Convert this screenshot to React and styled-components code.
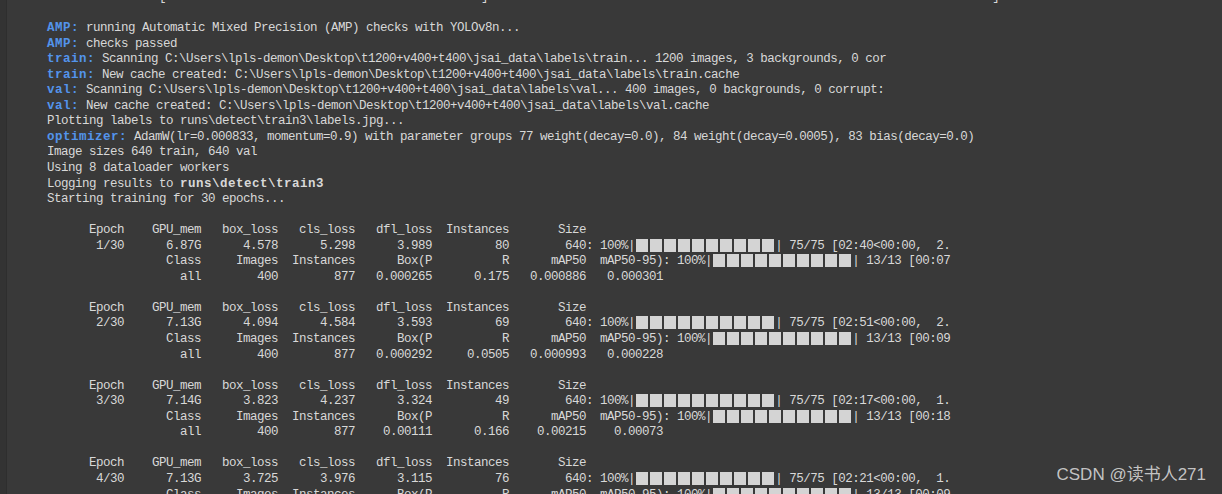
import React from "react"
import styled, { createGlobalStyle } from "styled-components"

const GlobalStyle = createGlobalStyle`
  html, body {
    margin: 0;
    background: #393939;
    overflow: hidden;
  }
`

const Screen = styled.div`
  position: relative;
  display: flex;
  width: 1222px;
  height: 494px;
  overflow: hidden;
  background: #393939;
`

const Gutter = styled.div`
  flex: none;
  width: 6px;
  background: #333333;
  border-right: 1px solid #2e2e2e;
`

const Console = styled.div`
  flex: 1;
  margin-top: -10px;
  padding-left: 40px;
  font-family: "Liberation Mono", monospace;
  font-size: 12.5px;
  letter-spacing: -0.5px;
  line-height: 15.55px;
  color: #d8d8d8;
`

const Line = styled.div`
  height: 15.55px;
  white-space: pre;
`

const Label = styled.b`
  font-weight: bold;
  letter-spacing: 0.5px;
  color: ${(p) => (p.$blue ? "#5394ec" : "inherit")};
`

const Cell = styled.span`
  display: inline-block;
  width: 12px;
  height: 13px;
  margin: 0 1px;
  vertical-align: -3px;
  background: #d4d4d4;
`

const Watermark = styled.div`
  position: absolute;
  right: 16px;
  bottom: 9px;
  font-family: "Liberation Sans", "Noto Sans CJK SC", sans-serif;
  font-size: 17px;
  color: rgba(214, 214, 214, 0.9);
`

const col = (v, w = 11) => String(v).padStart(w)

const Bar = ({ n = 10 }) => (
  <>
    {Array.from({ length: n }).map((_, i) => (
      <Cell key={i} />
    ))}
  </>
)

const epochs = [
  {
    epoch: "1/30", mem: "6.87G", box: "4.578", cls: "5.298", dfl: "3.989", inst: "80",
    train: "75/75 [02:40<00:00,  2.", val: "13/13 [00:07",
    res: ["0.000265", "0.175", "0.000886", "0.000301"],
  },
  {
    epoch: "2/30", mem: "7.13G", box: "4.094", cls: "4.584", dfl: "3.593", inst: "69",
    train: "75/75 [02:51<00:00,  2.", val: "13/13 [00:09",
    res: ["0.000292", "0.0505", "0.000993", "0.000228"],
  },
  {
    epoch: "3/30", mem: "7.14G", box: "3.823", cls: "4.237", dfl: "3.324", inst: "49",
    train: "75/75 [02:17<00:00,  1.", val: "13/13 [00:18",
    res: ["0.00111", "0.166", "0.00215", "0.00073"],
  },
  {
    epoch: "4/30", mem: "7.13G", box: "3.725", cls: "3.976", dfl: "3.115", inst: "76",
    train: "75/75 [02:21<00:00,  1.", val: "13/13 [00:09",
    res: ["0.00148", "0.171", "0.00263", "0.00091"],
  },
]

const header = ["Epoch", "GPU_mem", "box_loss", "cls_loss", "dfl_loss", "Instances", "Size"]
  .map((s) => col(s))
  .join("")

const valHeader =
  col("Class", 22) +
  ["Images", "Instances", "Box(P", "R", "mAP50", "mAP50-95)"].map((s) => col(s)).join("")

const EpochBlock = ({ e }) => (
  <>
    <Line>{header}</Line>
    <Line>
      {[e.epoch, e.mem, e.box, e.cls, e.dfl, e.inst, "640"].map((s) => col(s)).join("")}
      {": 100%|"}
      <Bar />
      {"| " + e.train}
    </Line>
    <Line>
      {valHeader}
      {": 100%|"}
      <Bar />
      {"| " + e.val}
    </Line>
    <Line>{col("all", 22) + col(400) + col(877) + e.res.map((s) => col(s)).join("")}</Line>
    <Line> </Line>
  </>
)

const path = "C:\\Users\\lpls-demon\\Desktop\\t1200+v400+t400\\jsai_data\\labels\\"

const App = () => (
  <Screen>
    <GlobalStyle />
    <Gutter />
    <Console>
      <Line>{"                [                                             ]                                                                        ]"}</Line>
      <Line> </Line>
      <Line>
        <Label $blue>AMP:</Label> running Automatic Mixed Precision (AMP) checks with YOLOv8n...
      </Line>
      <Line>
        <Label $blue>AMP:</Label> checks passed
      </Line>
      <Line>
        <Label $blue>train:</Label>
        {" Scanning " + path + "train... 1200 images, 3 backgrounds, 0 cor"}
      </Line>
      <Line>
        <Label $blue>train:</Label>
        {" New cache created: " + path + "train.cache"}
      </Line>
      <Line>
        <Label $blue>val:</Label>
        {" Scanning " + path + "val... 400 images, 0 backgrounds, 0 corrupt:"}
      </Line>
      <Line>
        <Label $blue>val:</Label>
        {" New cache created: " + path + "val.cache"}
      </Line>
      <Line>{"Plotting labels to runs\\detect\\train3\\labels.jpg... "}</Line>
      <Line>
        <Label $blue>optimizer:</Label>
        {" AdamW(lr=0.000833, momentum=0.9) with parameter groups 77 weight(decay=0.0), 84 weight(decay=0.0005), 83 bias(decay=0.0)"}
      </Line>
      <Line>Image sizes 640 train, 640 val</Line>
      <Line>Using 8 dataloader workers</Line>
      <Line>
        {"Logging results to "}
        <Label>{"runs\\detect\\train3"}</Label>
      </Line>
      <Line>Starting training for 30 epochs...</Line>
      <Line> </Line>
      {epochs.map((e) => (
        <EpochBlock key={e.epoch} e={e} />
      ))}
    </Console>
    <Watermark>CSDN @读书人271</Watermark>
  </Screen>
)

export default App
